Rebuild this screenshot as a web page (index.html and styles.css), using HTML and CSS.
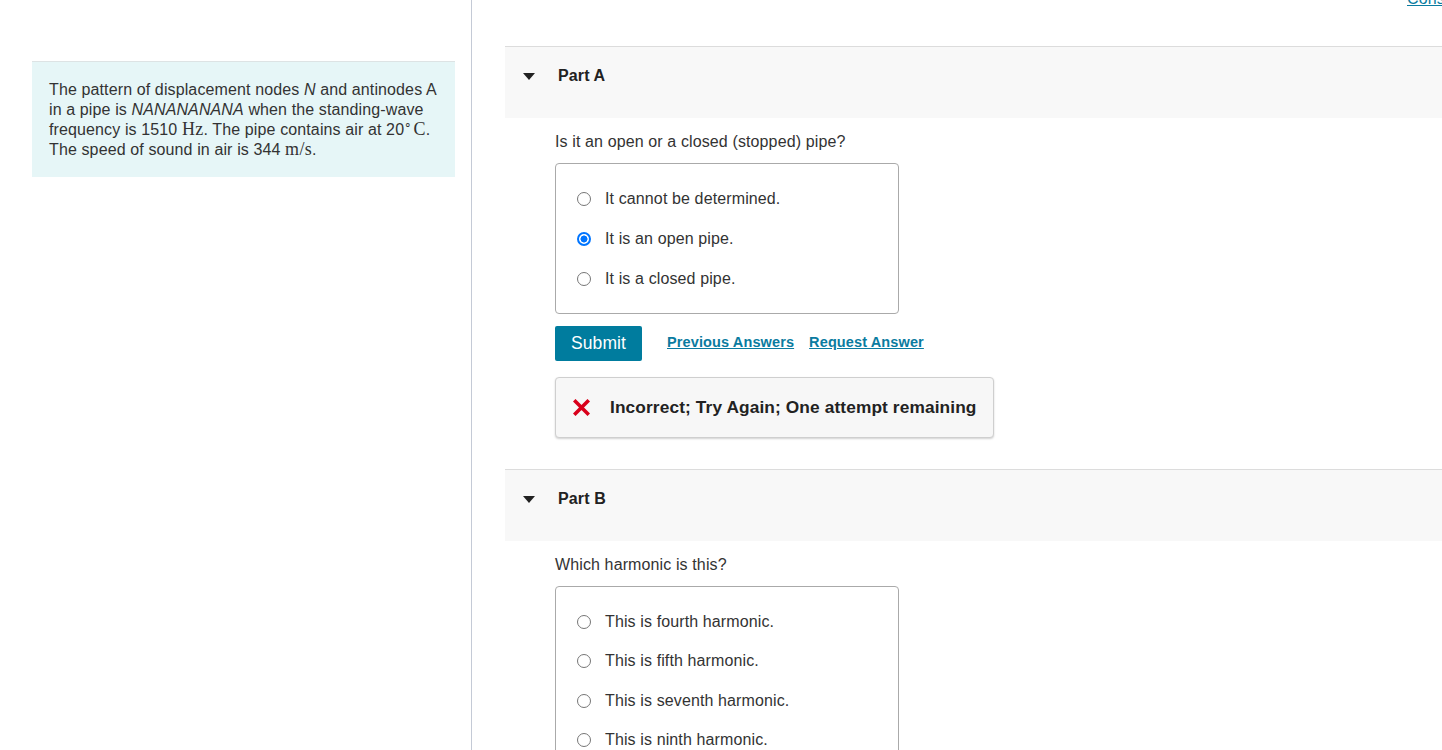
FILE: index.html
```html
<!DOCTYPE html>
<html lang="en">
<head>
<meta charset="utf-8">
<title>Part A</title>
<link rel="stylesheet" href="styles.css">
</head>
<body>
<a class="top-link" href="#">Constants</a>
<div class="page">
  <aside class="left">
    <div class="problem">
      The pattern of displacement nodes <i>N</i> and antinodes A in a pipe is <i>NANANANANA</i> when the standing-wave frequency is 1510 <span class="m">Hz</span>. The pipe contains air at 20<span class="m"><sup class="deg">∘</sup>C</span>. The speed of sound in air is 344 <span class="m">m/s</span>.
    </div>
  </aside>
  <div class="divider"></div>
  <main class="right">
    <section class="part">
      <div class="part-head">
        <svg class="caret" width="12" height="7" viewBox="0 0 12 7"><polygon points="0,0 12,0 6,7" fill="#222"/></svg>
        <span class="part-title">Part A</span>
      </div>
      <div class="part-body">
        <p class="question">Is it an open or a closed (stopped) pipe?</p>
        <div class="options">
          <label class="opt"><input type="radio" name="a"><span>It cannot be determined.</span></label>
          <label class="opt"><input type="radio" name="a" checked><span>It is an open pipe.</span></label>
          <label class="opt"><input type="radio" name="a"><span>It is a closed pipe.</span></label>
        </div>
        <div class="actions">
          <button class="submit">Submit</button>
          <a class="link" href="#">Previous Answers</a>
          <a class="link" href="#">Request Answer</a>
        </div>
        <div class="feedback">
          <svg class="xmark" width="17" height="17" viewBox="0 0 17 17"><path d="M2.5 2.5 L14.5 14.5 M14.5 2.5 L2.5 14.5" stroke="#d9001b" stroke-width="3.6" stroke-linecap="square"/></svg>
          <span>Incorrect; Try Again; One attempt remaining</span>
        </div>
      </div>
    </section>
    <section class="part part-b">
      <div class="part-head">
        <svg class="caret" width="12" height="7" viewBox="0 0 12 7"><polygon points="0,0 12,0 6,7" fill="#222"/></svg>
        <span class="part-title">Part B</span>
      </div>
      <div class="part-body">
        <p class="question">Which harmonic is this?</p>
        <div class="options options-b">
          <label class="opt"><input type="radio" name="b"><span>This is fourth harmonic.</span></label>
          <label class="opt"><input type="radio" name="b"><span>This is fifth harmonic.</span></label>
          <label class="opt"><input type="radio" name="b"><span>This is seventh harmonic.</span></label>
          <label class="opt"><input type="radio" name="b"><span>This is ninth harmonic.</span></label>
        </div>
      </div>
    </section>
  </main>
</div>
</body>
</html>
```
FILE: styles.css
```css
html, body {
  margin: 0;
  padding: 0;
  height: 100%;
  overflow: hidden;
  background: #fff;
  font-family: "Liberation Sans", Arial, sans-serif;
  color: #333;
  letter-spacing: 0.12px;
}
.top-link {
  position: absolute;
  top: -10px;
  left: 1407px;
  font-size: 16px;
  color: #0a7ba0;
  text-decoration: underline;
  white-space: nowrap;
}
.page {
  display: flex;
  height: 100%;
}
.left {
  width: 471px;
  flex: none;
  padding-left: 32px;
  padding-top: 61px;
  box-sizing: border-box;
}
.problem {
  width: 423px;
  box-sizing: border-box;
  background: #e6f6f7;
  border-top: 1px solid #dde3e4;
  padding: 18px 17px 17px 17px;
  font-size: 16px;
  line-height: 20px;
  color: #333;
}
.problem .m {
  font-family: "Liberation Serif", "Times New Roman", serif;
  font-size: 18px;
  line-height: 0;
  letter-spacing: 0.3px;
}
.problem .deg {
  font-size: 12px;
  line-height: 0;
  vertical-align: 6px;
  margin-right: 1px;
}
.divider {
  width: 1px;
  flex: none;
  background: #c4cad6;
}
.right {
  flex: 1;
  padding-left: 33px;
  padding-top: 46px;
  min-width: 0;
}
.part-head {
  display: flex;
  align-items: flex-start;
  height: 72px;
  background: #f8f8f8;
  border-top: 1px solid #dcdcdc;
  padding-left: 18px;
  padding-top: 20px;
  box-sizing: border-box;
}
.caret {
  display: block;
  margin-right: 23px;
  margin-top: 6px;
}
.part-title {
  font-weight: bold;
  font-size: 16px;
  line-height: 18px;
  color: #222;
}
.part-body {
  padding-left: 50px;
}
.question {
  margin: 0;
  padding-top: 15px;
  font-size: 16px;
  line-height: 18px;
  color: #333;
}
.options {
  margin-top: 12px;
  width: 344px;
  box-sizing: border-box;
  border: 1px solid #aaa;
  border-radius: 4px;
  padding: 15px 0 14px 21px;
  display: flex;
  flex-direction: column;
}
.opt {
  display: flex;
  align-items: center;
  height: 40px;
  font-size: 16px;
  color: #333;
}
.opt input {
  appearance: none;
  -webkit-appearance: none;
  box-sizing: border-box;
  width: 14px;
  height: 14px;
  border: 1.5px solid #767676;
  border-radius: 50%;
  background: #fff;
  margin: 0 14px 0 0;
  flex: none;
}
.opt input:checked {
  border: 2px solid #0075ff;
  background: radial-gradient(circle, #0075ff 0 3.2px, #fff 3.8px);
}
.options-b {
  height: 200px;
  padding-top: 15px;
}
.options-b .opt {
  height: 39.5px;
}
.actions {
  display: flex;
  align-items: center;
  margin-top: 12px;
}
.submit {
  width: 87px;
  height: 35px;
  border: none;
  border-radius: 2px;
  background: #007c9e;
  color: #fff;
  font-family: "Liberation Sans", Arial, sans-serif;
  font-size: 17.5px;
  letter-spacing: 0.1px;
  padding: 0;
  margin-right: 25px;
}
.link {
  font-size: 14.5px;
  font-weight: bold;
  color: #0a7ba0;
  text-decoration: underline;
  margin-right: 15px;
  margin-top: -3px;
}
.feedback {
  display: flex;
  align-items: center;
  width: 439px;
  height: 61px;
  box-sizing: border-box;
  margin-top: 16px;
  background: #f7f7f7;
  border: 1px solid #cfcfcf;
  border-radius: 4px;
  box-shadow: 0 1px 2px rgba(0,0,0,0.18);
  padding-left: 17px;
  margin-bottom: 31px;
}
.xmark {
  display: block;
  margin-right: 20px;
}
.feedback span {
  font-weight: bold;
  font-size: 17.3px;
  color: #222;
}
```
